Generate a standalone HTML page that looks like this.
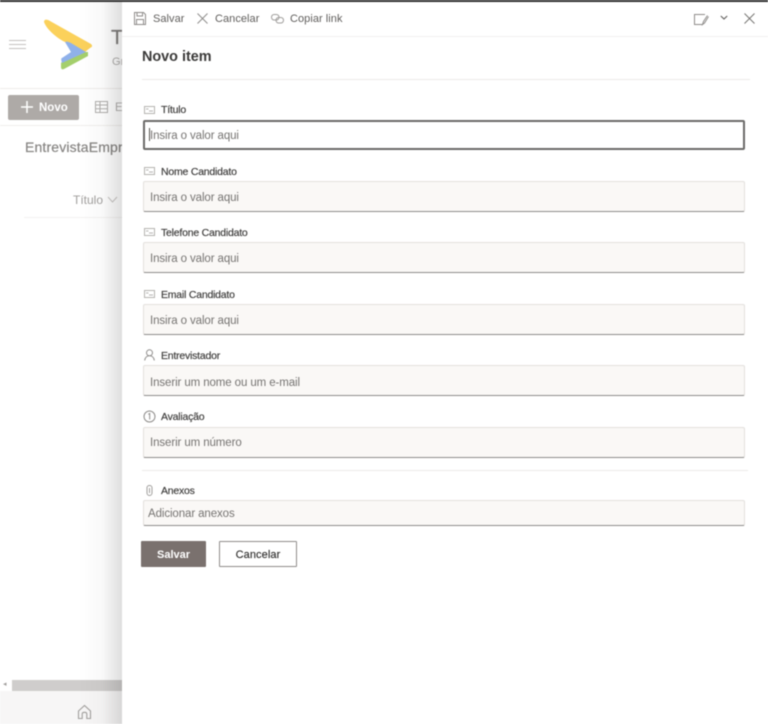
<!DOCTYPE html>
<html lang="pt">
<head>
<meta charset="utf-8">
<title>Novo item</title>
<style>
html,body{margin:0;padding:0;background:#fff}
#root{position:relative;width:768px;height:724px;overflow:hidden;background:#fff;font-family:"Liberation Sans",sans-serif;filter:blur(.4px)}
#root div,#root svg{position:absolute}
.t{white-space:nowrap;line-height:16px}
.lbl{font-size:10.5px;color:#3b3a39;left:161px;letter-spacing:-.22px;-webkit-text-stroke:.15px #3b3a39}
.inp{left:143px;width:600px;height:29px;background:#faf8f6;border:1px solid #e3e0dd;border-bottom:1px solid #8f8d8b;border-radius:2px}
.ph{font-size:11.5px;color:#767472;left:150px;letter-spacing:-.1px}
.cmd{font-size:11px;color:#605e5c;top:11px;letter-spacing:.05px}
.ic{fill:none;stroke:#8f8d8b;stroke-width:1}
</style>
</head>
<body>
<div id="root">
  <!-- background page -->
  <div style="left:0;top:0;width:122px;height:724px;background:#fff"></div>
  <svg style="left:9px;top:40px" width="18" height="10" viewBox="0 0 18 10"><path d="M0 .5h17M0 4.500h17M0 8.500h17" stroke="#c4c2c0" fill="none"/></svg>
  <svg style="left:40px;top:15px" width="56" height="60" viewBox="40 15 56 60">
    <path d="M44 22C44 19 47 19 50 21L91 44C93 46 92 47 90 48L85 52L65 42C57 38 47 30 44 22Z" fill="#fbd15b"/>
    <path d="M88 52L88 56L64 69C62 70 61 69 61 67L61 63L62 62L85 52Z" fill="#a4cf6c"/>
    <path d="M65 42C67 41 69 42 71 43L86 52L62 63C61 60 61 58 62 58L71 52Z" fill="#8fb1ea"/>
  </svg>
  <div class="t" style="left:111px;top:27px;font-size:20px;line-height:22px;color:#7f7d7b;-webkit-text-stroke:.2px #7f7d7b">Tr</div>
  <div class="t" style="left:112px;top:54px;font-size:11px;color:#b0aeac">Gr</div>
  <div style="left:0;top:88px;width:122px;height:1px;background:#eeecea"></div>
  <div style="left:8px;top:95px;width:71px;height:25px;background:#aeaaa7;border-radius:2px"></div>
  <svg style="left:20px;top:100px" width="14" height="14" viewBox="0 0 14 14"><path d="M7 1v12M1 7h12" stroke="#fff" stroke-width="1.500" fill="none"/></svg>
  <div class="t" style="left:39px;top:100px;font-size:11.500px;font-weight:bold;color:#fff">Novo</div>
  <svg style="left:95px;top:100px" width="14" height="14" viewBox="0 0 14 14"><path d="M.5 1.500h12v11H.5zM.5 5h12M.5 8.700h12M5 1.500v11" stroke="#b0aeac" fill="none"/></svg>
  <div class="t" style="left:115px;top:100px;font-size:11.500px;color:#b0aeac">E</div>
  <div style="left:0;top:125px;width:122px;height:1px;background:#f0eeec"></div>
  <div class="t" style="left:25px;top:139px;font-size:14px;color:#878583;letter-spacing:.15px;width:97px;overflow:hidden;-webkit-text-stroke:.2px #878583">EntrevistaEmpr</div>
  <div class="t" style="left:73px;top:192px;font-size:12px;color:#a19f9d">Título</div>
  <svg style="left:107px;top:196px" width="11" height="8" viewBox="0 0 11 8"><path d="M1 1l4.500 5L10 1" stroke="#c8c6c4" fill="none"/></svg>
  <div style="left:24px;top:217px;width:98px;height:1px;background:#f3f2f1"></div>
  <div style="left:0;top:680px;width:122px;height:44px;background:#fff"></div>
  <div class="t" style="left:3px;top:677px;font-size:7px;color:#a19f9d">◂</div>
  <div style="left:12px;top:680px;width:110px;height:11px;background:#cfcdcc"></div>
  <div style="left:0;top:691px;width:122px;height:33px;background:#f7f6f6"></div>
  <svg style="left:77px;top:704px" width="15" height="16" viewBox="0 0 15 16"><path d="M1.500 7L7.500 1.500L13.500 7V14.500H9.800V10C9.800 7.800 5.200 7.800 5.200 10V14.500H1.500Z" stroke="#a19f9d" stroke-width="1.100" fill="none"/></svg>
  <!-- shadow -->
  <div style="left:78px;top:0;width:44px;height:724px;background:linear-gradient(to right,rgba(0,0,0,0),rgba(0,0,0,.025) 55%,rgba(0,0,0,.13))"></div>
  <!-- panel -->
  <div style="left:122px;top:0;width:646px;height:724px;background:#fff"></div>
  <div style="left:0;top:0;width:768px;height:1.500px;background:#2e2e2e"></div>
  <div style="left:122px;top:36px;width:646px;height:1px;background:#f1f0ef"></div>
  <svg style="left:134px;top:12px" width="12" height="13" viewBox="0 0 12 13"><path class="ic" d="M.5.500h9l2 2v10H.5zM3 .5v3.500h5.500V.5M2.500 12.500V7.500h7v5"/></svg>
  <div class="t cmd" style="left:153px">Salvar</div>
  <svg style="left:197px;top:13px" width="11" height="11" viewBox="0 0 11 11"><path class="ic" d="M.5.500l10 10M10.500.500l-10 10"/></svg>
  <div class="t cmd" style="left:215px">Cancelar</div>
  <svg style="left:271px;top:14px" width="13" height="10" viewBox="0 0 13 10"><rect x=".5" y=".5" width="7.500" height="5.500" rx="2.700" class="ic" style="stroke:#a19f9d"/><rect x="5" y="3.500" width="7.500" height="5.500" rx="2.700" class="ic" style="stroke:#a19f9d"/></svg>
  <div class="t cmd" style="left:290px">Copiar link</div>
  <svg style="left:694px;top:13px" width="15" height="13" viewBox="0 0 15 13"><path class="ic" d="M9 11.500H.5V1.500H11M13.500 2.500L9.500 8.500L8.500 11.500L10.500 10L14.500 3.500"/></svg>
  <svg style="left:720px;top:15px" width="8" height="6" viewBox="0 0 8 6"><path d="M.8 1l3.200 3L7.200 1" stroke="#605e5c" stroke-width="1.100" fill="none"/></svg>
  <svg style="left:744px;top:13px" width="11" height="11" viewBox="0 0 11 11"><path d="M.5.500l10 10M10.500.500l-10 10" stroke="#777573" fill="none"/></svg>

  <div class="t" style="left:142px;top:50px;line-height:15px;font-size:14.400px;font-weight:bold;color:#3b3a39">Novo item</div>
  <div style="left:142px;top:79px;width:608px;height:1px;background:#edebe9"></div>

  <!-- Titulo -->
  <svg style="left:144px;top:106px" width="11" height="8" viewBox="0 0 11 8"><path d="M.5.500h10v7H.5zM2 3h2.500M5 5h4" stroke="#b5b3b1" fill="none"/></svg>
  <div class="t lbl" style="top:102px">Título</div>
  <div style="left:143px;top:120px;width:598px;height:26px;background:#fff;border:2px solid #6b6a68;border-radius:2px"></div>
  <div style="left:149px;top:128px;width:1px;height:13px;background:#55534f"></div>
  <div class="t ph" style="top:128px">Insira o valor aqui</div>

  <!-- Nome -->
  <svg style="left:144px;top:167px" width="11" height="8" viewBox="0 0 11 8"><path d="M.5.500h10v7H.5zM2 3h2.500M5 5h4" stroke="#b5b3b1" fill="none"/></svg>
  <div class="t lbl" style="top:164px">Nome Candidato</div>
  <div class="inp" style="top:181px"></div>
  <div class="t ph" style="top:190px">Insira o valor aqui</div>

  <!-- Telefone -->
  <svg style="left:144px;top:228px" width="11" height="8" viewBox="0 0 11 8"><path d="M.5.500h10v7H.5zM2 3h2.500M5 5h4" stroke="#b5b3b1" fill="none"/></svg>
  <div class="t lbl" style="top:225px">Telefone Candidato</div>
  <div class="inp" style="top:242px"></div>
  <div class="t ph" style="top:251px">Insira o valor aqui</div>

  <!-- Email -->
  <svg style="left:144px;top:290px" width="11" height="8" viewBox="0 0 11 8"><path d="M.5.500h10v7H.5zM2 3h2.500M5 5h4" stroke="#b5b3b1" fill="none"/></svg>
  <div class="t lbl" style="top:287px">Email Candidato</div>
  <div class="inp" style="top:304px"></div>
  <div class="t ph" style="top:313px">Insira o valor aqui</div>

  <!-- Entrevistador -->
  <svg style="left:144px;top:349px" width="11" height="12" viewBox="0 0 11 12"><path class="ic" d="M5.500.800a3 3 0 1 1 0 6a3 3 0 1 1 0-6M.700 11.500C1 8.500 3 6.800 5.500 6.800S10 8.500 10.300 11.500"/></svg>
  <div class="t lbl" style="top:348px">Entrevistador</div>
  <div class="inp" style="top:365px"></div>
  <div class="t ph" style="top:375px">Inserir um nome ou um e-mail</div>

  <!-- Avaliacao -->
  <svg style="left:143px;top:410px" width="13" height="13" viewBox="0 0 13 13"><circle cx="6.500" cy="6.500" r="5.500" class="ic"/><path d="M5.300 4.300L6.700 3.500V9.500" stroke="#8f8d8b" fill="none"/></svg>
  <div class="t lbl" style="top:409px">Avaliação</div>
  <div class="inp" style="top:427px"></div>
  <div class="t ph" style="top:435px">Inserir um número</div>

  <div style="left:142px;top:470px;width:606px;height:1px;background:#edebe9"></div>

  <!-- Anexos -->
  <svg style="left:146px;top:485px" width="7" height="11" viewBox="0 0 7 11"><path d="M1 2.500a2.500 2 0 0 1 5 0V8a2.500 2.500 0 0 1-5 0zM3.500 3v5" stroke="#a19f9d" fill="none"/></svg>
  <div class="t lbl" style="top:483px">Anexos</div>
  <div style="left:143px;top:500px;width:600px;height:24px;background:#faf8f6;border:1px solid #e3e0dd;border-bottom:1px solid #8f8d8b;border-radius:2px"></div>
  <div class="t ph" style="left:148px;top:506px">Adicionar anexos</div>

  <!-- Buttons -->
  <div style="left:141px;top:541px;width:65px;height:26px;background:#7a716e;border-radius:1px"></div>
  <div class="t" style="left:141px;width:65px;text-align:center;top:547px;font-size:11px;font-weight:bold;color:#fff">Salvar</div>
  <div style="left:219px;top:541px;width:76px;height:24px;background:#fff;border:1px solid #8f8d8b;border-radius:1px"></div>
  <div class="t" style="left:219px;width:78px;text-align:center;top:547px;font-size:11px;color:#323130;letter-spacing:.1px;-webkit-text-stroke:.15px #323130">Cancelar</div>
</div>
</body>
</html>
